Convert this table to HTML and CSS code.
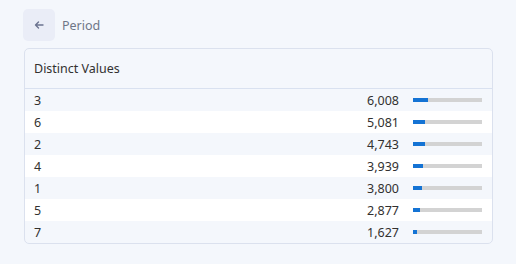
FILE: index.html
```html
<!DOCTYPE html>
<html>
<head>
<meta charset="utf-8">
<link rel="stylesheet" href="styles.css">
</head>
<body>
<div class="page">
  <div class="topbar">
    <button class="back" aria-label="Back">
      <svg width="10" height="10" viewBox="0 0 10 10"><path d="M9 5H1.5M4.5 2L1.5 5l3 3" fill="none" stroke="#6b7390" stroke-width="1.4" stroke-linecap="round" stroke-linejoin="round"/></svg>
    </button>
    <span class="crumb">Period</span>
  </div>
  <div class="card">
    <div class="card-head">Distinct Values</div>
    <div class="rows">
      <div class="row"><span class="key">3</span><span class="num">6,008</span><span class="bar"><span class="fill" style="width:21.4%"></span></span></div>
      <div class="row"><span class="key">6</span><span class="num">5,081</span><span class="bar"><span class="fill" style="width:18.1%"></span></span></div>
      <div class="row"><span class="key">2</span><span class="num">4,743</span><span class="bar"><span class="fill" style="width:16.9%"></span></span></div>
      <div class="row"><span class="key">4</span><span class="num">3,939</span><span class="bar"><span class="fill" style="width:14.0%"></span></span></div>
      <div class="row"><span class="key">1</span><span class="num">3,800</span><span class="bar"><span class="fill" style="width:13.5%"></span></span></div>
      <div class="row"><span class="key">5</span><span class="num">2,877</span><span class="bar"><span class="fill" style="width:10.2%"></span></span></div>
      <div class="row"><span class="key">7</span><span class="num">1,627</span><span class="bar"><span class="fill" style="width:5.8%"></span></span></div>
    </div>
  </div>
</div>
</body>
</html>
```

FILE: styles.css
```css
html, body {
  margin: 0;
  padding: 0;
  background: #f4f7fc;
}
body {
  font-family: "Noto Sans", "Open Sans", sans-serif;
  font-size: 12.5px;
  color: #323130;
}
.page {
  padding: 9px 23px 0 23px;
}
.topbar {
  display: flex;
  align-items: center;
  gap: 7px;
  height: 32px;
}
.back {
  width: 32px;
  height: 32px;
  border: none;
  border-radius: 5px;
  background: #eaedf7;
  display: flex;
  align-items: center;
  justify-content: center;
  padding: 0;
}
.crumb {
  color: #6e7687;
}
.card {
  margin: 7px 0 0 1px;
  border: 1px solid #dbe1ee;
  border-radius: 5px;
  background: #f4f7fc;
  overflow: hidden;
}
.card-head {
  height: 39px;
  display: flex;
  align-items: center;
  padding: 0 9px;
  border-bottom: 1px solid #d9e1f0;
}
.row {
  height: 22px;
  display: flex;
  align-items: center;
  padding: 0 10px 0 9px;
}
.row:nth-child(even) {
  background: #ffffff;
}
.key {
  flex: 1;
}
.num {
  text-align: right;
}
.bar {
  width: 69px;
  height: 4px;
  margin-left: 14px;
  background: #d3d3d3;
  display: flex;
}
.fill {
  background: #1473d4;
  height: 100%;
}
```
